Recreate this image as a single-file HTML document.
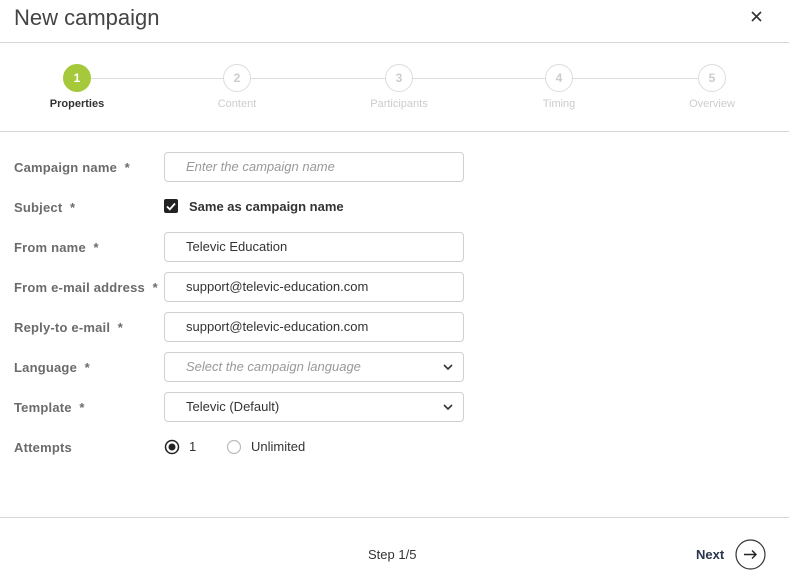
<!DOCTYPE html><html><head><style>
body{margin:0;width:789px;height:577px;background:#fff;font-family:"Liberation Sans",sans-serif;position:relative;overflow:hidden;color:#333}
.a{position:absolute}
.hr{position:absolute;left:0;width:789px;height:1px;background:#d6d6d6}
.c{position:absolute;width:26px;height:26px;border:1px solid #ddd;border-radius:50%;top:64px;text-align:center;line-height:26px;font-size:12px;font-weight:bold;color:#ccc;background:#fff}
.sl{position:absolute;top:98px;font-size:11px;color:#ccc;width:100px;text-align:center}
.lb{position:absolute;left:14px;font-size:13px;font-weight:bold;color:#6b6b6b;letter-spacing:0.2px}
.in{position:absolute;left:164px;width:298px;height:28px;border:1px solid #d0d0d0;border-radius:4px;font-size:13px;line-height:28px;box-sizing:content-box}
.in span{position:absolute;left:21px}
.ph{color:#999;font-style:italic}
.chev{position:absolute;right:10px;top:10px}
</style></head><body>
<div class="a" style="left:14px;top:5px;font-size:22px;color:#444">New campaign</div>
<svg class="a" style="left:751px;top:11px" width="11" height="11"><path d="M1 1l9 9M10 1l-9 9" stroke="#333" stroke-width="1.6"/></svg>
<div class="hr" style="top:42px"></div>
<div class="a" style="left:90px;top:78px;width:620px;height:1px;background:#ddd"></div>
<div class="c" style="left:63px;background:#a5c93a;border-color:#a5c93a;color:#fff">1</div>
<div class="c" style="left:223px">2</div>
<div class="c" style="left:385px">3</div>
<div class="c" style="left:545px">4</div>
<div class="c" style="left:698px">5</div>
<div class="sl" style="left:27px;color:#333;font-weight:bold">Properties</div>
<div class="sl" style="left:187px">Content</div>
<div class="sl" style="left:349px">Participants</div>
<div class="sl" style="left:509px">Timing</div>
<div class="sl" style="left:662px">Overview</div>
<div class="hr" style="top:131px"></div>

<div class="lb" style="top:160px">Campaign name &nbsp;*</div>
<div class="in" style="top:152px"><span class="ph">Enter the campaign name</span></div>
<div class="lb" style="top:200px">Subject &nbsp;*</div>
<div class="a" style="left:164px;top:199px;width:14px;height:14px;background:#222;border-radius:2px"><svg width="14" height="14"><path d="M3 7.5l2.8 2.8L11 4.5" stroke="#fff" stroke-width="1.8" fill="none"/></svg></div>
<div class="a" style="left:189px;top:199px;font-size:13px;font-weight:bold;color:#333">Same as campaign name</div>
<div class="lb" style="top:240px">From name &nbsp;*</div>
<div class="in" style="top:232px"><span>Televic Education</span></div>
<div class="lb" style="top:280px">From e-mail address &nbsp;*</div>
<div class="in" style="top:272px"><span>support@televic-education.com</span></div>
<div class="lb" style="top:320px">Reply-to e-mail &nbsp;*</div>
<div class="in" style="top:312px"><span>support@televic-education.com</span></div>
<div class="lb" style="top:360px">Language &nbsp;*</div>
<div class="in" style="top:352px"><span class="ph">Select the campaign language</span><svg class="chev" width="10" height="8"><path d="M1 2l4 4 4-4" stroke="#333" stroke-width="1.6" fill="none"/></svg></div>
<div class="lb" style="top:400px">Template &nbsp;*</div>
<div class="in" style="top:392px"><span>Televic (Default)</span><svg class="chev" width="10" height="8"><path d="M1 2l4 4 4-4" stroke="#333" stroke-width="1.6" fill="none"/></svg></div>
<div class="lb" style="top:440px">Attempts</div>
<svg class="a" style="left:164px;top:439px" width="16" height="16"><circle cx="8" cy="8" r="6.5" stroke="#222" stroke-width="1.5" fill="#fff"/><circle cx="8" cy="8" r="3.5" fill="#222"/></svg>
<div class="a" style="left:189px;top:439px;font-size:13px">1</div>
<svg class="a" style="left:226px;top:439px" width="16" height="16"><circle cx="8" cy="8" r="6.5" stroke="#bbb" stroke-width="1.2" fill="#fff"/></svg>
<div class="a" style="left:251px;top:439px;font-size:13px">Unlimited</div>

<div class="hr" style="top:517px"></div>
<div class="a" style="left:368px;top:547px;font-size:13px;color:#333">Step 1/5</div>
<div class="a" style="left:696px;top:547px;font-size:13px;font-weight:bold;color:#2a3550">Next</div>
<svg class="a" style="left:735px;top:539px" width="31" height="31"><circle cx="15.5" cy="15.5" r="14.5" stroke="#333" stroke-width="1.2" fill="none"/><path d="M9 15.5h12M17 11.5l4 4-4 4" stroke="#222" stroke-width="1.4" fill="none"/></svg>
</body></html>
